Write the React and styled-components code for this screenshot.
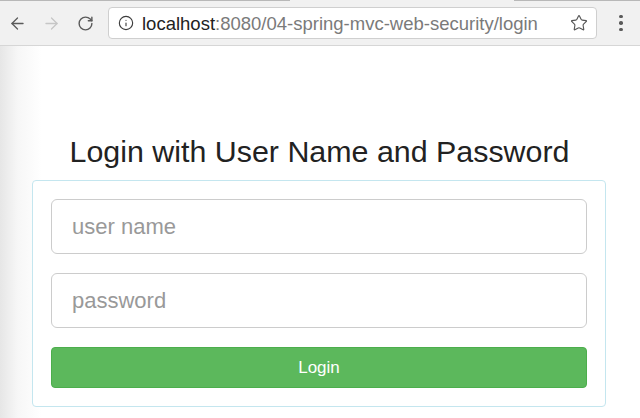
import React from "react";
import styled, { createGlobalStyle } from "styled-components";
import { ArrowLeft, ArrowRight, RotateCw, Info, Star } from "lucide-react";

const GlobalStyle = createGlobalStyle`
  html, body {
    margin: 0;
    padding: 0;
    background: #ffffff;
  }
  body {
    font-family: "Liberation Sans", Arial, Helvetica, sans-serif;
  }
  * {
    box-sizing: border-box;
  }
`;

const App = () => {
  return (
    <Window>
      <GlobalStyle />
      <TabEdge>
        <TabLine $width="290px" />
        <TabGap />
        <TabLine />
      </TabEdge>

      <Toolbar>
        <NavButton>
          <ArrowLeft size={19} strokeWidth={1.6} color="#5a5a5a" />
        </NavButton>
        <NavButton>
          <ArrowRight size={19} strokeWidth={1.6} color="#c6c6c6" />
        </NavButton>
        <NavButton>
          <RotateCw size={17} strokeWidth={2} color="#5a5a5a" />
        </NavButton>

        <AddressBar>
          <Info size={16} strokeWidth={1.7} color="#3c3c3c" />
          <Url>
            <Host>localhost</Host>:8080/04-spring-mvc-web-security/login
          </Url>
          <Star size={18} strokeWidth={1.5} color="#555" />
        </AddressBar>

        <MenuButton>
          <Dot />
          <Dot />
          <Dot />
        </MenuButton>
      </Toolbar>

      <Page>
        <Heading>Login with User Name and Password</Heading>
        <Panel>
          <Field type="text" placeholder="user name" />
          <Field type="password" placeholder="password" />
          <SubmitButton type="button">Login</SubmitButton>
        </Panel>
      </Page>
    </Window>
  );
};

export default App;

const Window = styled.div`
  width: 640px;
  height: 418px;
  overflow: hidden;
  display: flex;
  flex-direction: column;
  background: #ffffff;
`;

const TabEdge = styled.div`
  display: flex;
  height: 1px;
  background: #f1f1f1;
`;

const TabLine = styled.div`
  flex: ${(p) => (p.$width ? "none" : "1")};
  width: ${(p) => p.$width || "auto"};
  background: #b8b8b8;
`;

const TabGap = styled.div`
  width: 224px;
`;

const Toolbar = styled.div`
  height: 45px;
  display: flex;
  align-items: center;
  background: #f1f1f1;
  border-bottom: 1px solid #d6d6d6;
`;

const NavButton = styled.div`
  width: 34px;
  height: 32px;
  display: flex;
  align-items: center;
  justify-content: center;
`;

const AddressBar = styled.div`
  margin-left: 6px;
  width: 489px;
  height: 32px;
  display: flex;
  align-items: center;
  gap: 8px;
  padding: 0 8px 0 9px;
  background: #ffffff;
  border: 1px solid #cfcfcf;
  border-radius: 4px;
`;

const Url = styled.div`
  flex: 1;
  font-size: 18.5px;
  color: #7a7a7a;
  white-space: nowrap;
  padding-top: 1px;
`;

const Host = styled.span`
  color: #222222;
`;

const MenuButton = styled.div`
  margin-left: 7px;
  width: 34px;
  height: 32px;
  display: flex;
  flex-direction: column;
  align-items: center;
  justify-content: center;
  gap: 3px;
`;

const Dot = styled.span`
  width: 3.5px;
  height: 3.5px;
  border-radius: 50%;
  background: #5a5a5a;
`;

const Page = styled.div`
  flex: 1;
  padding-top: 89px;
  background: linear-gradient(to right, #e6e6e6 0px, #f7f7f7 18px, #ffffff 42px);
`;

const Heading = styled.h2`
  margin: 0 0 12px 0;
  padding-right: 1px;
  text-align: center;
  font-size: 30.4px;
  line-height: 33px;
  font-weight: 400;
  color: #222222;
`;

const Panel = styled.div`
  margin-left: 32px;
  width: 574px;
  display: flex;
  flex-direction: column;
  gap: 19px;
  padding: 18px;
  background: #ffffff;
  border: 1px solid #c4e6ef;
  border-radius: 4px;
`;

const Field = styled.input`
  display: block;
  width: 100%;
  height: 55px;
  padding: 0 20px;
  font-family: "Liberation Sans", Arial, sans-serif;
  font-size: 22px;
  color: #555;
  background: #ffffff;
  border: 1px solid #cccccc;
  border-radius: 6px;
  outline: none;

  &::placeholder {
    color: #999999;
  }
`;

const SubmitButton = styled.button`
  display: block;
  width: 100%;
  height: 41px;
  padding: 0;
  font-family: "Liberation Sans", Arial, sans-serif;
  font-size: 17px;
  color: #ffffff;
  background: #5cb85c;
  border: 1px solid #4cae4c;
  border-radius: 4px;
  cursor: pointer;
`;
